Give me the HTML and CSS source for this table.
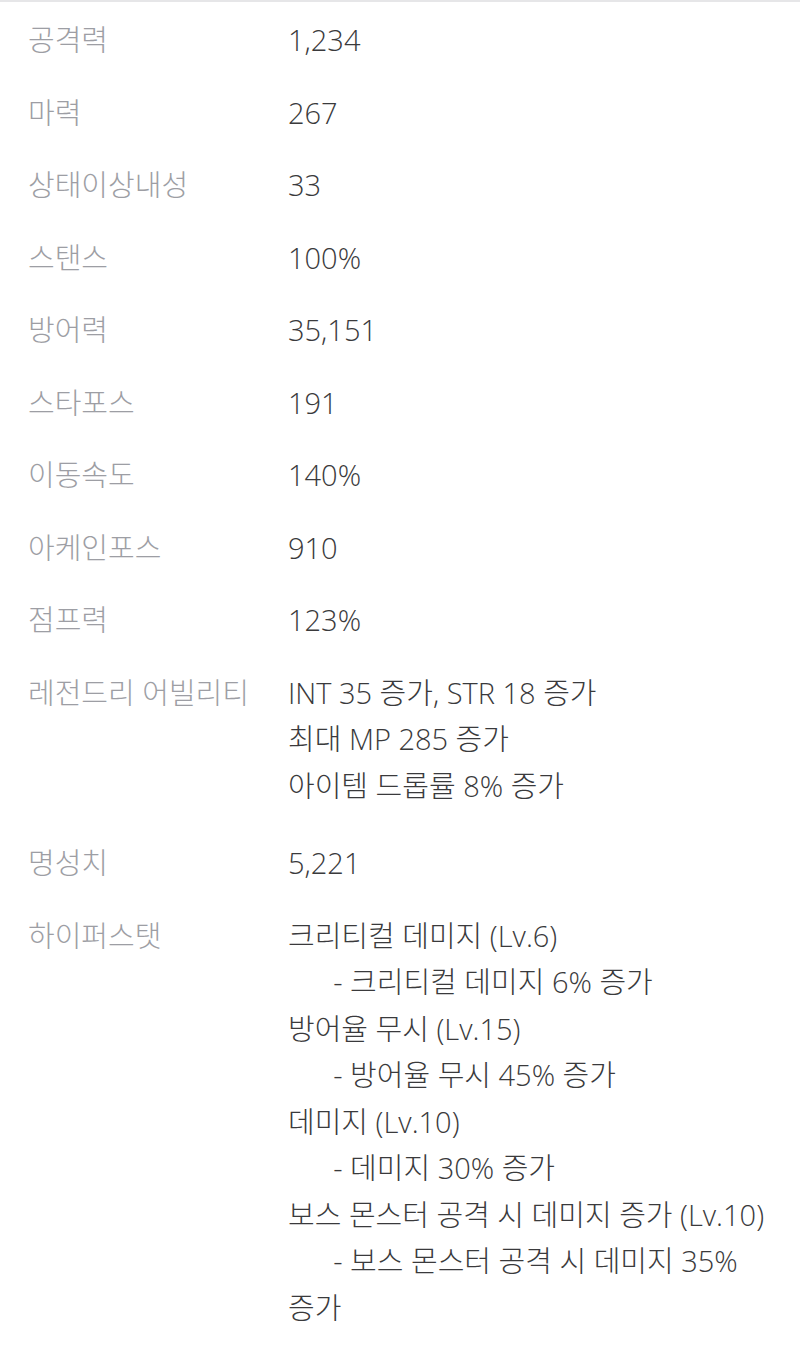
FILE: index.html
```html
<!DOCTYPE html>
<html lang="ko">
<head>
    <meta charset="UTF-8">
    <meta name="viewport" content="width=device-width, initial-scale=1.0">
    <title>캐릭터 능력치</title>
    <link rel="stylesheet" href="styles.css">
</head>
<body>
    <div class="stats">
        <div class="row"><div class="label">공격력</div><div class="value">1,234</div></div>
        <div class="row"><div class="label">마력</div><div class="value">267</div></div>
        <div class="row"><div class="label">상태이상내성</div><div class="value">33</div></div>
        <div class="row"><div class="label">스탠스</div><div class="value">100%</div></div>
        <div class="row"><div class="label">방어력</div><div class="value">35,151</div></div>
        <div class="row"><div class="label">스타포스</div><div class="value">191</div></div>
        <div class="row"><div class="label">이동속도</div><div class="value">140%</div></div>
        <div class="row"><div class="label">아케인포스</div><div class="value">910</div></div>
        <div class="row"><div class="label">점프력</div><div class="value">123%</div></div>
        <div class="row multi">
            <div class="label">레전드리 어빌리티</div>
            <div class="value">INT 35 증가, STR 18 증가<br>최대 MP 285 증가<br>아이템 드롭률 8% 증가</div>
        </div>
        <div class="row"><div class="label">명성치</div><div class="value">5,221</div></div>
        <div class="row multi">
            <div class="label">하이퍼스탯</div>
            <div class="value">크리티컬 데미지 (Lv.6)<br>&nbsp;&nbsp;&nbsp;&nbsp;&nbsp;&nbsp;- 크리티컬 데미지 6% 증가<br>방어율 무시 (Lv.15)<br>&nbsp;&nbsp;&nbsp;&nbsp;&nbsp;&nbsp;- 방어율 무시 45% 증가<br>데미지 (Lv.10)<br>&nbsp;&nbsp;&nbsp;&nbsp;&nbsp;&nbsp;- 데미지 30% 증가<br>보스 몬스터 공격 시 데미지 증가 (Lv.10)<br>&nbsp;&nbsp;&nbsp;&nbsp;&nbsp;&nbsp;- 보스 몬스터 공격 시 데미지 35% 증가</div>
        </div>
    </div>
</body>
</html>
```

FILE: styles.css
```css
body {
    margin: 0;
    background-color: #ffffff;
    font-family: "Open Sans", "Noto Sans CJK KR", sans-serif;
    font-size: 29px;
    font-weight: 300;
}
.stats {
    border-top: 2px solid #e6e6e8;
    padding: 2px 28px 0;
}
.row {
    display: grid;
    grid-template-columns: 260px 1fr;
    padding: 13px 0;
    line-height: 46.5px;
}
.row.multi {
    padding-bottom: 18px;
}
.label {
    color: #9d9ea4;
}
.value {
    color: #3a3a3c;
    word-break: keep-all;
}
```
